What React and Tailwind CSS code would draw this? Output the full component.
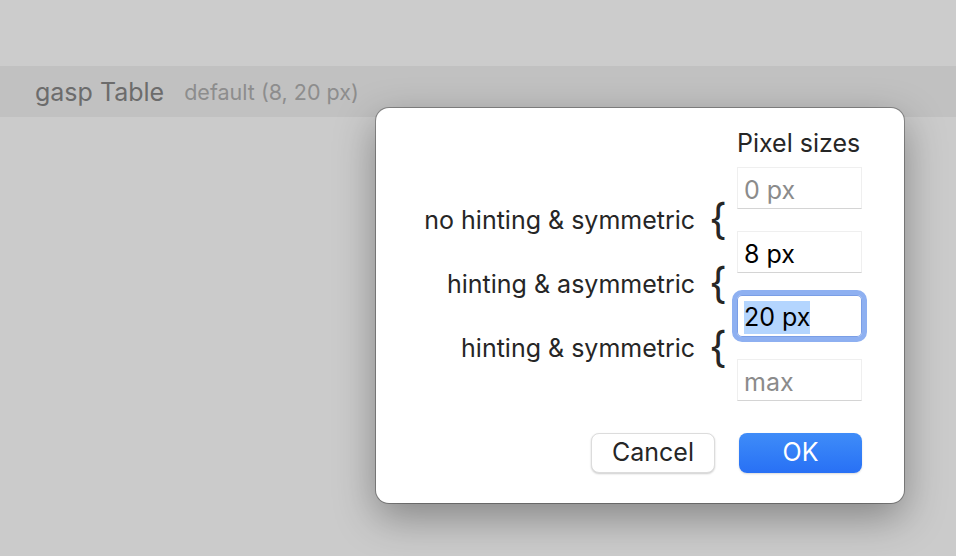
import React from "react";

const font = { fontFamily: "Inter, 'Helvetica Neue', Arial, sans-serif" };

function Field({ value, placeholder, focused }) {
  if (focused) {
    return (
      <div className="h-[42px] w-[125px] rounded-[5px] bg-white outline-[5px] outline-[#8eb0f1] outline-solid shadow-[inset_0_0_0_1px_#7a9ee6] flex items-center pl-[7px] pt-[2px]">
        <span className="bg-[#b4d5fe] text-[25px] leading-[33px] text-black">{value}</span>
      </div>
    );
  }
  return (
    <div className="h-[42px] w-[125px] bg-white border border-[#efefef] border-b-[#d4d4d4] flex items-center pl-[6px] pt-[3px]">
      {value ? (
        <span className="text-[25px] leading-[30px] text-black">{value}</span>
      ) : (
        <span className="text-[25px] leading-[30px] text-[#8b8b8b]">{placeholder}</span>
      )}
    </div>
  );
}

function LabelRow({ text }) {
  return (
    <div className="h-[64px] flex items-center justify-end">
      <span className="text-[25px] leading-[30px] text-[#262626]">{text}</span>
      <span className="ml-[14px] mr-[10px] text-[42px] leading-[40px] font-normal text-[#262626] -mt-[3px]">{"{"}</span>
    </div>
  );
}

export default function App() {
  return (
    <div style={font} className="relative w-[956px] h-[556px] overflow-hidden bg-[#cbcbcb]">
      <div className="h-[66px] bg-[#cccccc]" />
      <div className="h-[51px] bg-[#c1c1c1] flex items-center pl-[35px] gap-[20px]">
        <span className="text-[25px] text-[#6c6c6c] pt-[2px]">gasp Table</span>
        <span className="text-[21.5px] text-[#8d8d8d] pt-[2px]">default (8, 20 px)</span>
      </div>

      <div className="absolute left-[376px] top-[108px] w-[528px] h-[395px] rounded-[13px] bg-white ring-1 ring-black/30 shadow-[0_14px_40px_rgba(0,0,0,0.35)] flex flex-col pt-[20px] pr-[42px] pb-[30px]">
        <div className="flex justify-end">
          <div className="w-[125px] text-[25px] leading-[30px] text-[#262626] -ml-[2px]">Pixel sizes</div>
        </div>
        <div className="mt-[9px] flex justify-end">
          <div className="flex flex-col pt-[21px]">
            <LabelRow text="no hinting & symmetric" />
            <LabelRow text="hinting & asymmetric" />
            <LabelRow text="hinting & symmetric" />
          </div>
          <div className="flex flex-col gap-[22px]">
            <Field placeholder="0 px" />
            <Field value="8 px" />
            <Field value="20 px" focused />
            <Field placeholder="max" />
          </div>
        </div>
        <div className="mt-auto flex justify-end gap-[24px]">
          <button className="h-[40px] w-[124px] rounded-[8px] bg-white border border-[#dcdcdc] shadow-[0_1px_2px_rgba(0,0,0,0.2)] text-[25px] text-[#262626]">
            Cancel
          </button>
          <button className="h-[40px] w-[123px] rounded-[8px] bg-gradient-to-b from-[#3f8cf8] to-[#2870f5] shadow-[0_1px_2px_rgba(0,0,0,0.15)] text-[25px] text-white">
            OK
          </button>
        </div>
      </div>
    </div>
  );
}
